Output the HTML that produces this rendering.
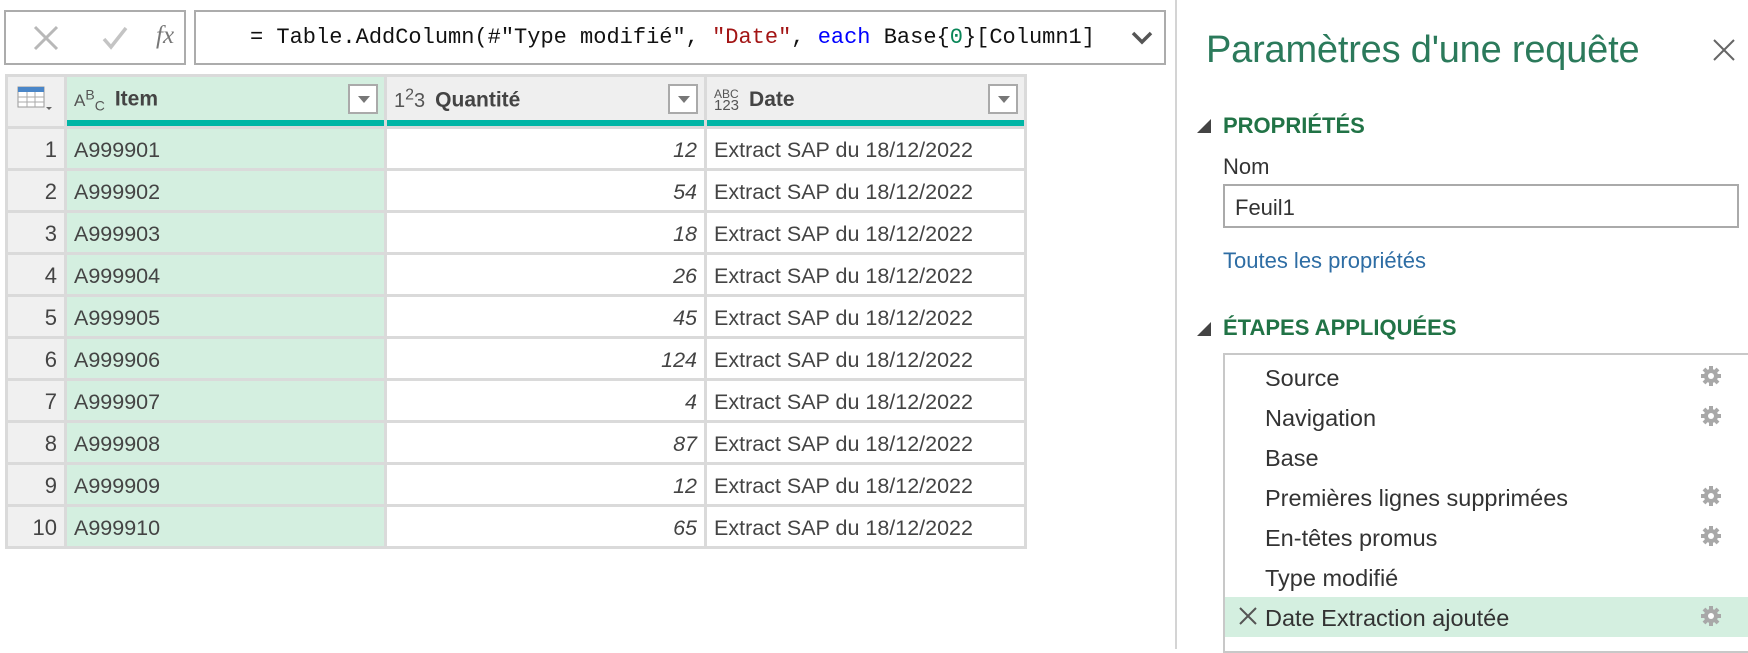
<!DOCTYPE html>
<html><head><meta charset="utf-8"><style>
*{box-sizing:border-box;margin:0;padding:0}
body{width:1748px;height:649px;background:#fff;position:relative;overflow:hidden;font-family:"Liberation Sans",sans-serif;color:#333}
.abs{position:absolute}
.tb{left:4px;top:10px;width:182px;height:55px;border:2px solid #acacac}
.fb{left:194px;top:10px;width:972px;height:55px;border:2px solid #acacac;font-family:"Liberation Mono",monospace;font-size:22px;line-height:51px;padding-left:54px;color:#111;white-space:nowrap}
.sep{left:1175px;top:0;width:2px;height:649px;background:#d4d4d4}
table{position:absolute;left:5px;top:74px;border-collapse:collapse;font-size:21.5px;color:#444;table-layout:fixed}
td,th{border:3px solid #dadada;height:42px;padding:0 7px;white-space:nowrap;padding-top:3px}
th{height:44px;background:#efefef;text-align:left;font-weight:bold;position:relative;border-bottom:none;font-size:21px}
tr.teal td{height:8px;padding:0;background:#00b5a5;border-top:none;border-bottom:none}
tr.teal td.rn{background:#efefef}
.rn{background:#f0f0f0;text-align:right;width:59px;color:#444;font-size:22px}
.it{background:#d4efe0;width:320px}
.q{width:320px;text-align:right;font-style:italic}
.d{width:320px}
.dd{position:absolute;right:6px;top:7px;width:30px;height:30px;border:2px solid #aaa;background:#fff}
.dd:after{content:"";position:absolute;left:8px;top:10px;border-left:6px solid transparent;border-right:6px solid transparent;border-top:7px solid #777}
.ty{font-weight:normal;color:#555;margin-right:10px}
.green{color:#217346;font-weight:bold;font-size:22px}
.tri{width:0;height:0;border-left:14px solid transparent;border-bottom:14px solid #444}
.step{position:absolute;left:1265px;font-size:23.5px;color:#333}
.gear{position:absolute;left:1700px;width:22px;height:22px}
</style></head><body>
<div class="abs tb">
<svg class="abs" style="left:26px;top:12px" width="28" height="28" viewBox="0 0 28 28"><path d="M3 3L25 25M25 3L3 25" stroke="#b8b8b8" stroke-width="3"/></svg>
<svg class="abs" style="left:96px;top:14px" width="26" height="24" viewBox="0 0 26 24"><path d="M2 13L9 21L24 2" stroke="#c4c4c4" stroke-width="3.5" fill="none"/></svg>
<span class="abs" style="left:150px;top:10px;font-family:'Liberation Serif',serif;font-style:italic;font-size:25px;color:#777">fx</span>
</div>
<div class="abs fb">= Table.AddColumn(#"Type modifié", <span style="color:#a31515">"Date"</span>, <span style="color:#0000ff">each</span> Base{<span style="color:#098658">0</span>}[Column1]</div>
<svg class="abs" style="left:1131px;top:31px" width="22" height="14" viewBox="0 0 22 14"><path d="M2 2L11 11L20 2" stroke="#555" stroke-width="3.5" fill="none"/></svg>
<div class="abs sep"></div>
<table>
<tr><th class="rn" style="padding:0"><svg style="position:absolute;left:9px;top:9px" width="36" height="26" viewBox="0 0 36 26"><rect x="1" y="1" width="26" height="20" fill="#fff" stroke="#999"/><rect x="1" y="1" width="26" height="5" fill="#4a86c8"/><path d="M1 11H27M1 16H27M10 6V21M18 6V21" stroke="#aaa"/><path d="M29 21h6l-3 3z" fill="#666"/></svg></th>
<th class="it" style="background:#d4efe0"><span class="ty" style="font-size:17px">A<sup style="font-size:14px">B</sup><sub style="font-size:14px">C</sub></span>Item<span class="dd"></span></th>
<th class="q" style="text-align:left;font-style:normal"><span class="ty" style="font-size:20px">1<sup style="font-size:16px">2</sup>3</span>Quantité<span class="dd"></span></th>
<th class="d"><span class="ty" style="display:inline-block;line-height:12px;vertical-align:middle;font-size:12px">ABC<br><span style="font-size:15px">123</span></span>Date<span class="dd"></span></th></tr>
<tr class="teal"><td class="rn"></td><td></td><td></td><td></td></tr>
<tr><td class="rn">1</td><td class="it">A999901</td><td class="q">12</td><td class="d">Extract SAP du 18/12/2022</td></tr>
<tr><td class="rn">2</td><td class="it">A999902</td><td class="q">54</td><td class="d">Extract SAP du 18/12/2022</td></tr>
<tr><td class="rn">3</td><td class="it">A999903</td><td class="q">18</td><td class="d">Extract SAP du 18/12/2022</td></tr>
<tr><td class="rn">4</td><td class="it">A999904</td><td class="q">26</td><td class="d">Extract SAP du 18/12/2022</td></tr>
<tr><td class="rn">5</td><td class="it">A999905</td><td class="q">45</td><td class="d">Extract SAP du 18/12/2022</td></tr>
<tr><td class="rn">6</td><td class="it">A999906</td><td class="q">124</td><td class="d">Extract SAP du 18/12/2022</td></tr>
<tr><td class="rn">7</td><td class="it">A999907</td><td class="q">4</td><td class="d">Extract SAP du 18/12/2022</td></tr>
<tr><td class="rn">8</td><td class="it">A999908</td><td class="q">87</td><td class="d">Extract SAP du 18/12/2022</td></tr>
<tr><td class="rn">9</td><td class="it">A999909</td><td class="q">12</td><td class="d">Extract SAP du 18/12/2022</td></tr>
<tr><td class="rn">10</td><td class="it">A999910</td><td class="q">65</td><td class="d">Extract SAP du 18/12/2022</td></tr>
</table>

<div class="abs" style="left:1206px;top:29px;font-size:38px;color:#2b7a5b;letter-spacing:-0.2px">Paramètres d'une requête</div>
<svg class="abs" style="left:1712px;top:38px" width="24" height="24" viewBox="0 0 24 24"><path d="M2 2L22 22M22 2L2 22" stroke="#666" stroke-width="2"/></svg>
<div class="abs tri" style="left:1197px;top:119px"></div>
<div class="abs green" style="left:1223px;top:113px">PROPRIÉTÉS</div>
<div class="abs" style="left:1223px;top:154px;font-size:22px;color:#333">Nom</div>
<div class="abs" style="left:1223px;top:184px;width:516px;height:44px;border:2px solid #aaa;font-size:22px;padding:9px 10px;color:#333">Feuil1</div>
<div class="abs" style="left:1223px;top:248px;font-size:22px;color:#2e6da4">Toutes les propriétés</div>
<div class="abs tri" style="left:1197px;top:322px"></div>
<div class="abs green" style="left:1223px;top:315px">ÉTAPES APPLIQUÉES</div>
<div class="abs" style="left:1223px;top:353px;width:525px;height:300px;border:2px solid #c8c8c8;border-right:none"></div>
<div class="abs" style="left:1225px;top:597px;width:523px;height:40px;background:#d4efe0"></div>
<svg class="abs" style="left:1238px;top:606px" width="20" height="20" viewBox="0 0 20 20"><path d="M2 2L18 18M18 2L2 18" stroke="#555" stroke-width="2"/></svg>
<div class="step" style="top:365px">Source</div>
<div class="step" style="top:405px">Navigation</div>
<div class="step" style="top:445px">Base</div>
<div class="step" style="top:485px">Premières lignes supprimées</div>
<div class="step" style="top:525px">En-têtes promus</div>
<div class="step" style="top:565px">Type modifié</div>
<div class="step" style="top:605px">Date Extraction ajoutée</div>
<svg width="0" height="0" style="position:absolute"><defs><g id="g"><circle cx="11" cy="11" r="7" fill="#a8a8a8"/><path d="M11 1V21M1 11H21M4 4L18 18M18 4L4 18" stroke="#a8a8a8" stroke-width="4"/><circle cx="11" cy="11" r="3" fill="#fff"/></g></defs></svg>
<svg class="gear" style="top:365px"><use href="#g"/></svg>
<svg class="gear" style="top:405px"><use href="#g"/></svg>
<svg class="gear" style="top:485px"><use href="#g"/></svg>
<svg class="gear" style="top:525px"><use href="#g"/></svg>
<svg class="gear" style="top:605px"><use href="#g"/></svg>
</body></html>
